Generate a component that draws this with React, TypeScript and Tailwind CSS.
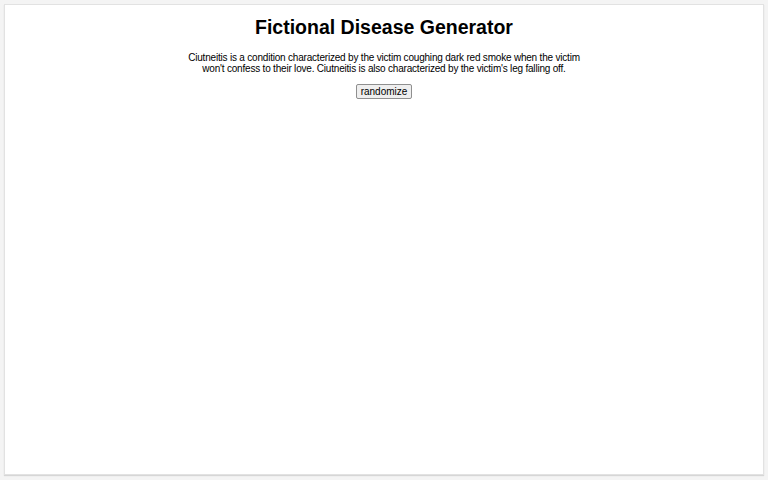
import React, { useState } from 'react';

const diseases = [
  "Ciutneitis is a condition characterized by the victim coughing dark red smoke when the victim won't confess to their love. Ciutneitis is also characterized by the victim's leg falling off.",
];

export default function App() {
  const [idx, setIdx] = useState(0);

  return (
    <div className="min-h-screen bg-[#f4f4f4] p-[4px] font-['Liberation_Sans',Arial,sans-serif]">
      <div className="h-[471px] bg-white border border-[#e2e2e2] shadow-[0_1px_1px_rgba(0,0,0,0.12)] flex flex-col items-center pt-[10px]">
        <h1 className="text-[19.5px] font-bold leading-[24px] text-black">Fictional Disease Generator</h1>
        <p className="mt-[13px] w-[410px] text-center text-[10px] leading-[11px] tracking-[-0.2px] text-black">
          {diseases[idx]}
        </p>
        <button
          className="mt-[10px] h-[15px] px-[4px] text-[10px] leading-[12px] text-black bg-[#efefef] border border-[#8f8f8f] rounded-[2px]"
          onClick={() => setIdx((idx + 1) % diseases.length)}
        >
          randomize
        </button>
      </div>
    </div>
  );
}
